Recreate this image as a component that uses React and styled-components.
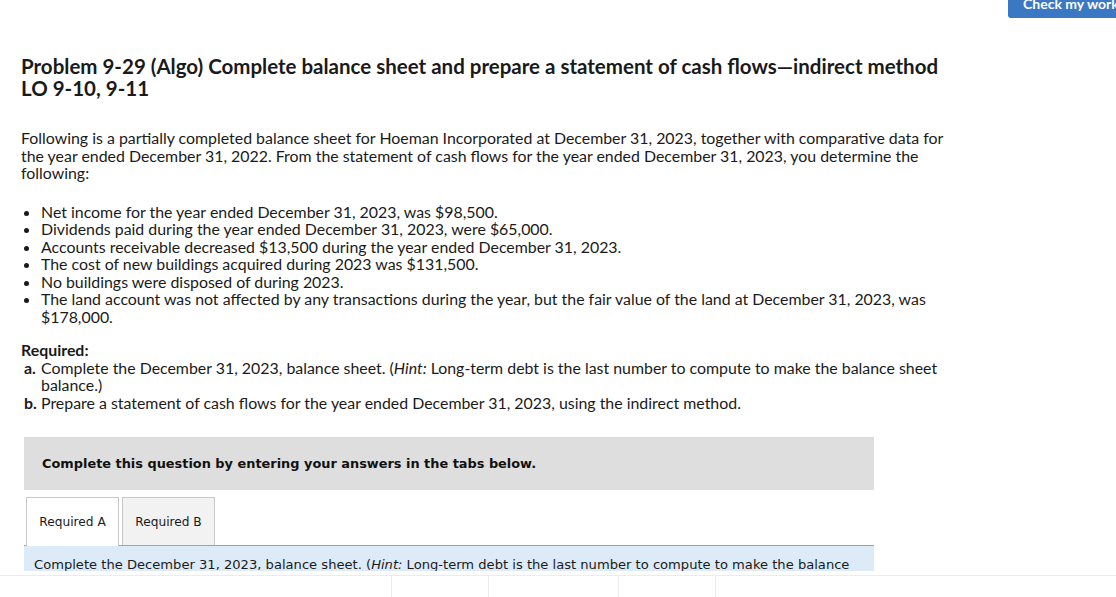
import React from 'react';
import styled, { createGlobalStyle } from 'styled-components';

const GlobalStyle = createGlobalStyle`
  html, body {
    margin: 0;
    padding: 0;
    overflow: hidden;
    background: #fff;
  }
`;

const Page = styled.div`
  display: flex;
  flex-direction: column;
  width: 1116px;
  height: 597px;
  overflow: hidden;
  font-family: Lato, "Open Sans", sans-serif;
  color: #1a1a1a;
`;

const Main = styled.div`
  flex: 1;
  overflow: hidden;
  display: flex;
  flex-direction: column;
`;

const TopBar = styled.div`
  display: flex;
  justify-content: flex-end;
  height: 18px;
  margin-right: -60px;
`;

const CheckButton = styled.button`
  height: 28px;
  margin-top: -10px;
  width: 168px;
  padding: 0 15px;
  text-align: left;
  border: none;
  border-radius: 3px;
  background: #3a78c4;
  color: #fff;
  font-family: Lato, sans-serif;
  font-weight: 700;
  font-size: 14px;
  line-height: 26px;
`;

const Content = styled.div`
  padding: 37px 0 0 21px;
  width: 930px;
`;

const Title = styled.h1`
  margin: 0;
  font-size: 20.5px;
  line-height: 22px;
  font-weight: 700;
  color: #1a1a1a;
`;

const Para = styled.p`
  margin: 30px 0 0;
  font-size: 15.9px;
  line-height: 17.5px;
`;

const Bullets = styled.ul`
  margin: 21px 0 0;
  padding-left: 20px;
  font-size: 15.9px;
  line-height: 17.5px;
`;

const Required = styled.div`
  margin-top: 16px;
  font-size: 15.9px;
  line-height: 17.5px;
`;

const ReqHead = styled.div`
  font-weight: 700;
`;

const ReqItem = styled.div`
  display: grid;
  grid-template-columns: 17px 1fr;
  margin-left: 3px;
  b { font-weight: 700; }
`;

const Question = styled.div`
  margin: 26px 0 0 24px;
  width: 850px;
  font-family: "DejaVu Sans", Verdana, sans-serif;
`;

const Banner = styled.div`
  background: #dedede;
  height: 53px;
  padding: 0 18px;
  display: flex;
  align-items: center;
  font-weight: 700;
  font-size: 12.9px;
  color: #111;
`;

const Tabs = styled.div`
  display: flex;
  gap: 3px;
  margin-top: 7px;
  padding-left: 2px;
  border-bottom: 1px solid #9aa3ad;
`;

const Tab = styled.div`
  width: 91px;
  display: flex;
  align-items: center;
  justify-content: center;
  font-size: 12.2px;
  color: #1a1a1a;
  border: 1px solid #c8c8c8;
  border-bottom: none;
  background: ${p => (p.$active ? '#fff' : '#f2f2f2')};
  margin-bottom: ${p => (p.$active ? '-1px' : '0')};
  height: ${p => (p.$active ? '48px' : '47px')};
`;

const Panel = styled.div`
  box-sizing: border-box;
  background: #ddebf8;
  padding: 10px 10px 0;
  height: 25px;
  overflow: hidden;
  font-size: 13.1px;
  line-height: 17px;
  color: #1a1a1a;
`;

const Footer = styled.div`
  height: 21px;
  border-top: 1px solid #ececec;
  display: flex;
  padding-left: 391px;
`;

const FooterCell = styled.div`
  width: ${p => p.$w}px;
  border-left: 1px solid #ececec;
`;

const bullets = [
  'Net income for the year ended December 31, 2023, was $98,500.',
  'Dividends paid during the year ended December 31, 2023, were $65,000.',
  'Accounts receivable decreased $13,500 during the year ended December 31, 2023.',
  'The cost of new buildings acquired during 2023 was $131,500.',
  'No buildings were disposed of during 2023.',
  'The land account was not affected by any transactions during the year, but the fair value of the land at December 31, 2023, was $178,000.',
];

export default function App() {
  return (
    <Page>
      <GlobalStyle />
      <Main>
        <TopBar>
          <CheckButton>Check my work</CheckButton>
        </TopBar>
        <Content>
          <Title>
            Problem 9-29 (Algo) Complete balance sheet and prepare a statement of cash flows—indirect method
            <br />
            LO 9-10, 9-11
          </Title>
          <Para>
            Following is a partially completed balance sheet for Hoeman Incorporated at December 31, 2023, together with comparative data for the year ended December 31, 2022. From the statement of cash flows for the year ended December 31, 2023, you determine the following:
          </Para>
          <Bullets>
            {bullets.map(b => (
              <li key={b}>{b}</li>
            ))}
          </Bullets>
          <Required>
            <ReqHead>Required:</ReqHead>
            <ReqItem>
              <b>a.</b>
              <span>
                Complete the December 31, 2023, balance sheet. (<i>Hint:</i> Long-term debt is the last number to compute to make the balance sheet balance.)
              </span>
            </ReqItem>
            <ReqItem>
              <b>b.</b>
              <span>Prepare a statement of cash flows for the year ended December 31, 2023, using the indirect method.</span>
            </ReqItem>
          </Required>
        </Content>
        <Question>
          <Banner>Complete this question by entering your answers in the tabs below.</Banner>
          <Tabs>
            <Tab $active>Required A</Tab>
            <Tab>Required B</Tab>
          </Tabs>
          <Panel>
            Complete the December 31, 2023, balance sheet. (<i>Hint:</i> Long-term debt is the last number to compute to make the balance sheet balance.)
          </Panel>
        </Question>
      </Main>
      <Footer>
        <FooterCell $w={96} />
        <FooterCell $w={129} />
        <FooterCell $w={96} />
        <FooterCell $w={1} />
      </Footer>
    </Page>
  );
}
